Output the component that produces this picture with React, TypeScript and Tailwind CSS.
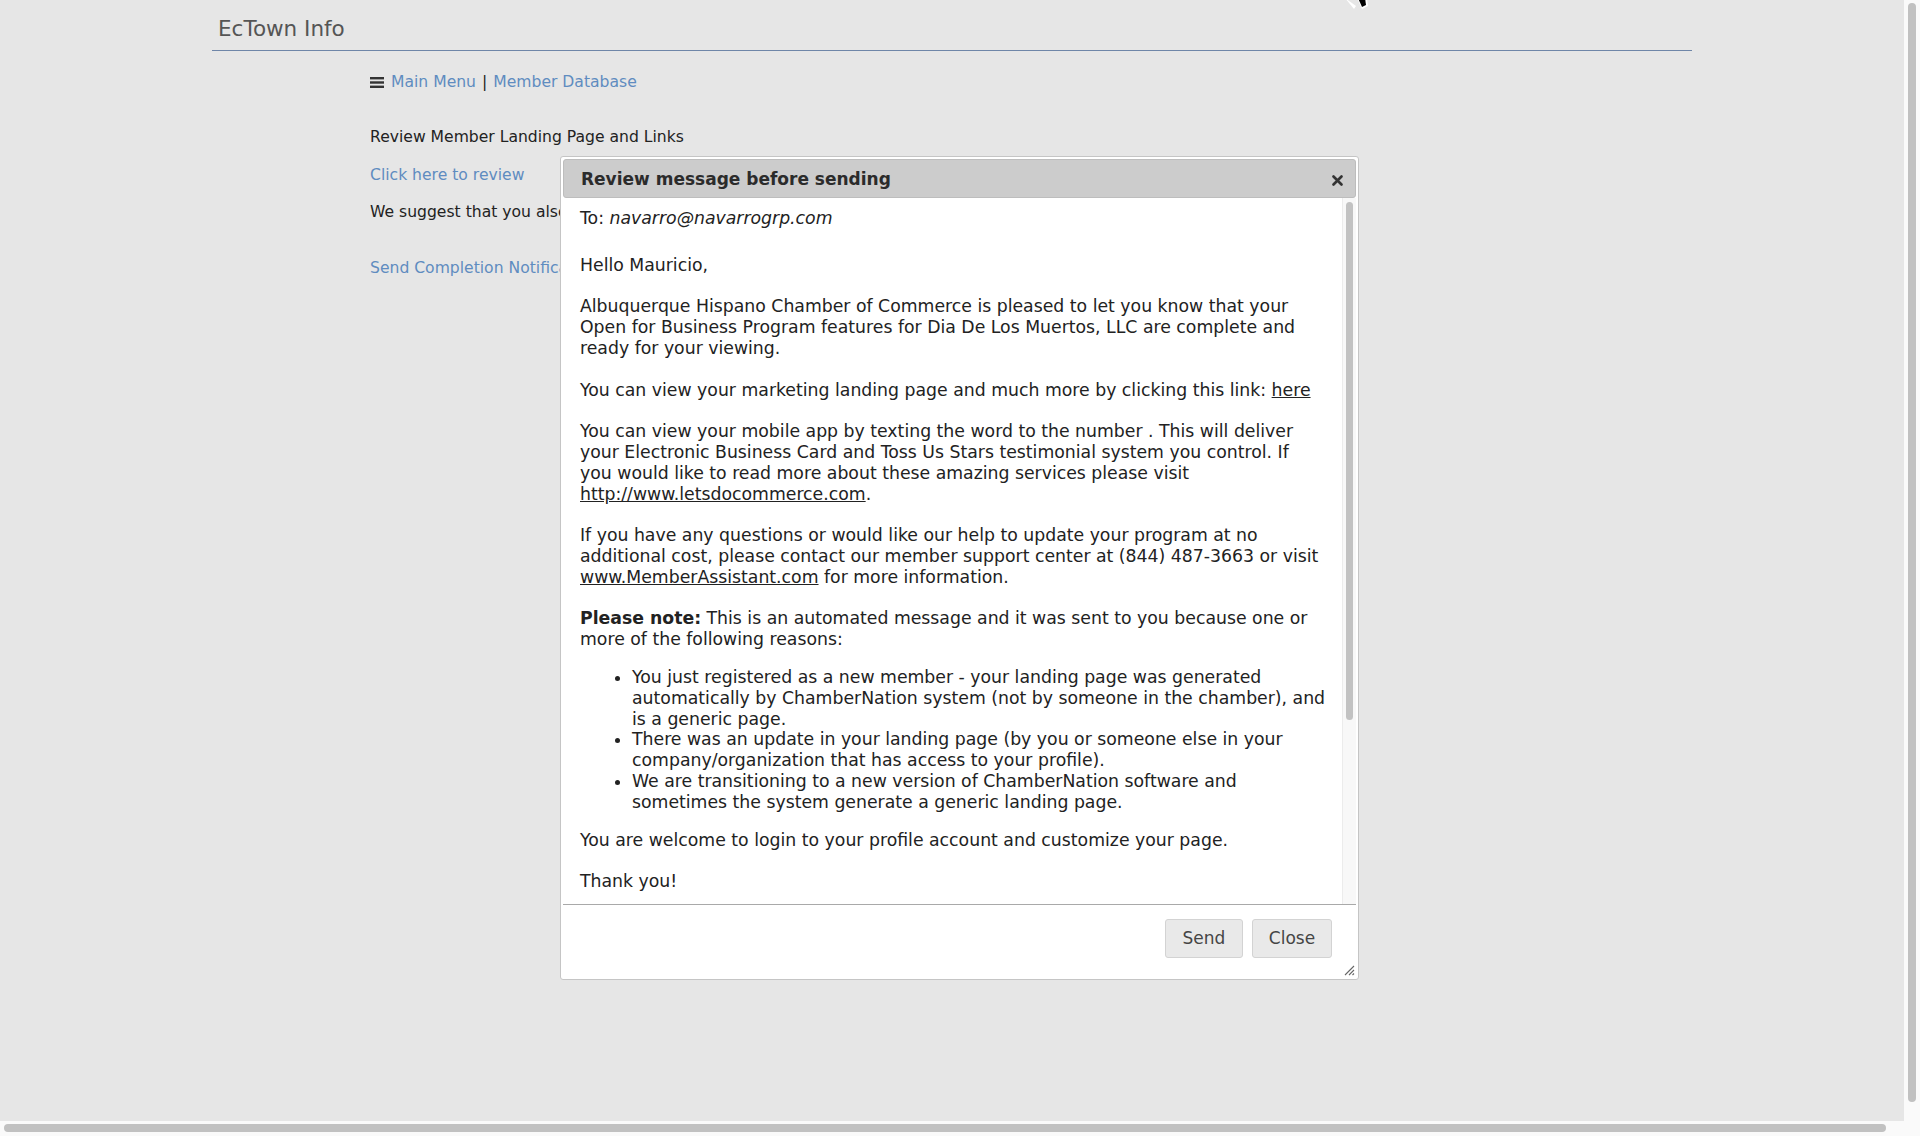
import React from 'react';

const FONT = '"DejaVu Sans", Verdana, sans-serif';

function Hamburger() {
  return (
    <svg width="14" height="13" viewBox="0 0 14 13" className="mr-[7px] shrink-0">
      <rect x="0" y="1" width="14" height="2.4" fill="#333" />
      <rect x="0" y="5.3" width="14" height="2.4" fill="#333" />
      <rect x="0" y="9.6" width="14" height="2.4" fill="#333" />
    </svg>
  );
}

function CloseIcon() {
  return (
    <svg width="11" height="11" viewBox="0 0 11 11">
      <path d="M1.5 1.5 L9.5 9.5 M9.5 1.5 L1.5 9.5" stroke="#333" strokeWidth="2.6" strokeLinecap="round" />
    </svg>
  );
}

function ResizeGrip() {
  return (
    <svg width="13" height="13" viewBox="0 0 13 13">
      <path d="M12 3 L3 12 M12 7 L7 12 M12 10.5 L10.5 12" stroke="#666" strokeWidth="1.1" />
    </svg>
  );
}

function Cursor() {
  return (
    <svg width="30" height="12" viewBox="0 0 30 12" className="absolute left-[1343px] top-0">
      <path d="M2 -2 L11 9 L13 6 Z" fill="#fff" />
      <path d="M14 -2 L24 -2 L25 6 L19 9 Z" fill="#fff" />
      <path d="M15 -2 L22 -2 L23 5 L19 7 Z" fill="#000" />
    </svg>
  );
}

function ReviewDialog() {
  return (
    <div className="absolute left-[560px] top-[156px] w-[799px] h-[824px] bg-white border border-[#c5c5c5] rounded-[3px] p-[2px] flex flex-col">
      <div className="h-[39px] shrink-0 bg-[#cccccc] border border-[#bdbdbd] rounded-[3px] flex items-center justify-between pl-[17px] pr-[12px] pt-[3px]">
        <span className="font-bold text-[17px] text-[#2b2b2b]">Review message before sending</span>
        <CloseIcon />
      </div>

      <div className="flex h-[706px] shrink-0">
        <div className="flex-1 overflow-hidden pl-[17px] pr-[21px] pt-[10px] text-[17.3px] leading-[20.8px] text-[#222]">
          <div>
            To: <i>navarro@navarrogrp.com</i>
          </div>
          <div className="mt-[26px]">
            Hello Mauricio,
            <br />
            <br />
            Albuquerque Hispano Chamber of Commerce is pleased to let you know that your Open for Business
            Program features for Dia De Los Muertos, LLC are complete and ready for your viewing.
            <br />
            <br />
            You can view your marketing landing page and much more by clicking this link: <u>here</u>
            <br />
            <br />
            You can view your mobile app by texting the word to the number . This will deliver your Electronic
            Business Card and Toss Us Stars testimonial system you control. If you would like to read more about
            these amazing services please visit <u>http://www.letsdocommerce.com</u>.
            <br />
            <br />
            If you have any questions or would like our help to update your program at no additional cost, please
            contact our member support center at (844) 487-3663 or visit <u>www.MemberAssistant.com</u> for more
            information.
            <br />
            <br />
            <b>Please note:</b> This is an automated message and it was sent to you because one or more of the
            following reasons:
          </div>
          <ul className="list-disc pl-[52px] my-[17px] mr-[-12px]">
            <li>
              You just registered as a new member - your landing page was generated automatically by ChamberNation
              system (not by someone in the chamber), and is a generic page.
            </li>
            <li>
              There was an update in your landing page (by you or someone else in your company/organization that has
              access to your profile).
            </li>
            <li>
              We are transitioning to a new version of ChamberNation software and sometimes the system generate a
              generic landing page.
            </li>
          </ul>
          <div>
            You are welcome to login to your profile account and customize your page.
            <br />
            <br />
            Thank you!
          </div>
        </div>
        <div className="w-[14px] shrink-0 bg-[#f8f8f8] border-l border-[#ececec] pt-[4px] pb-[8px] flex justify-center">
          <div className="w-[7px] h-[518px] rounded-full bg-[#c2c2c2]" />
        </div>
      </div>

      <div className="border-t border-[#a9a9a9] flex-1 relative flex justify-end items-start gap-[9px] pt-[14px] pr-[24px]">
        <button className="w-[78px] h-[39px] bg-[#e9e9e9] border border-[#d3d3d3] rounded-[3px] text-[17px] text-[#454545]">
          Send
        </button>
        <button className="w-[80px] h-[39px] bg-[#e9e9e9] border border-[#d3d3d3] rounded-[3px] text-[17px] text-[#454545]">
          Close
        </button>
        <div className="absolute right-[1px] bottom-[1px]">
          <ResizeGrip />
        </div>
      </div>
    </div>
  );
}

export default function App() {
  return (
    <div className="w-[1920px] h-[1136px] flex flex-col bg-[#e6e6e6] overflow-hidden" style={{ fontFamily: FONT }}>
      <div className="flex flex-1 min-h-0">
        <main className="flex-1 relative">
          <div className="mx-auto w-[1480px]">
            <header className="h-[51px] border-b border-[#6f86a8] pl-[6px] pt-[15px] text-[21.5px] leading-[28px] text-[#555]">
              EcTown Info
            </header>
            <div className="pl-[158px] text-[15.6px] leading-[20px] text-[#222]">
              <nav className="mt-[21px] flex items-center text-[#5f8cc0]">
                <Hamburger />
                <a>Main Menu</a>
                <span className="mx-[6px] text-[#222]">|</span>
                <a>Member Database</a>
              </nav>
              <div className="mt-[35px]">Review Member Landing Page and Links</div>
              <div className="mt-[18px] text-[#5f8cc0]">Click here to review</div>
              <div className="mt-[17px]">We suggest that you also review the member landing page before sending the notification.</div>
              <div className="mt-[36px] text-[#5f8cc0]">Send Completion Notification</div>
            </div>
          </div>
          <ReviewDialog />
          <Cursor />
        </main>
        <div className="w-[16px] shrink-0 bg-[#fafafa] flex justify-center pt-[3px]">
          <div className="w-[8px] h-[1099px] rounded-full bg-[#c1c1c1]" />
        </div>
      </div>
      <div className="h-[15px] shrink-0 bg-[#fafafa] pl-[4px] pt-[3px]">
        <div className="w-[1882px] h-[8px] rounded-full bg-[#c1c1c1]" />
      </div>
    </div>
  );
}
